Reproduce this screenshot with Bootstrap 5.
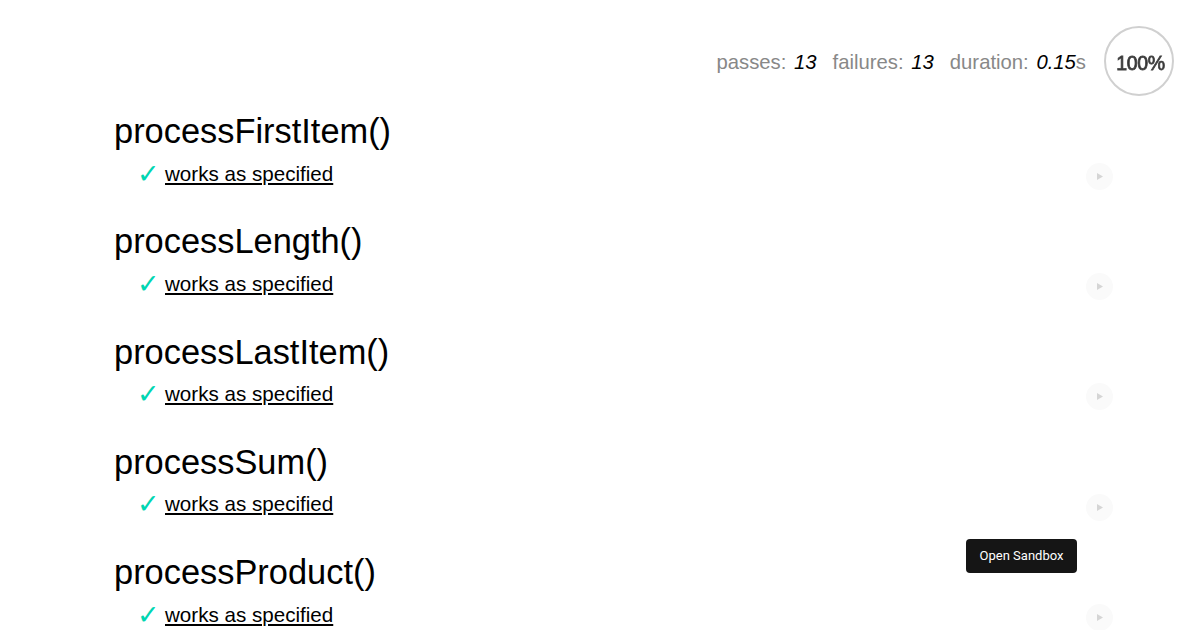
<!DOCTYPE html>
<html lang="en">
<head>
<meta charset="utf-8">
<title>Mocha report</title>
<link href="https://cdn.jsdelivr.net/npm/bootstrap@5.3.0/dist/css/bootstrap.min.css" rel="stylesheet">
<style>
html, body { height: 630px; overflow: hidden; background: #fff; }
body { font-family: "Liberation Sans", Arial, sans-serif; color: #000; position: relative; }
.stats-bar { height: 105.2px; padding: 26px 26px 0 0; }
.stat-line { font-size: 20.3px; line-height: 24px; color: #888; gap: 16px; margin-right: 18px; margin-top: 24px; }
.stat-line em { color: #000; margin-left: 2px; }
.ring { width: 70px; height: 70px; border-radius: 50%; border: 2px solid #d0d0d0; filter: blur(.5px); font-size: 19.5px; color: #333; -webkit-text-stroke: .8px #444; padding: 5px 0 0 3px; letter-spacing: -.4px; }
.suite-wrap { padding: 0 87px 0 114px; }
.suite-block { height: 110.25px; }
.suite-title { font-size: 34.4px; line-height: 40px; font-weight: 400; margin: 0; padding-top: 6px; height: 46.5px; color: #000; }
.spec-row { padding-left: 24px; height: 40px; }
.tick { color: #00d6b2; font-size: 27px; line-height: 30px; width: 27px; margin-top: 7px; margin-left: -1px; margin-right: 1px; font-family: "DejaVu Sans", sans-serif; }
.spec-link { color: #000; font-size: 20.6px; line-height: 30px; margin-top: 7px; }
.spec-link:hover { color: #000; }
.replay { width: 27px; height: 27px; border-radius: 50%; background: #fafafa; flex: none; margin-top: 11.3px; }
.tip-box { position: absolute; left: 966px; top: 539px; width: 111px; height: 34px; background: #151515; color: #fff; border-radius: 4px; font-family: Roboto, sans-serif; font-size: 13px; }
</style>
</head>
<body>
<div class="stats-bar d-flex justify-content-end align-items-start">
  <div class="stat-line d-flex">
    <span>passes: <em>13</em></span>
    <span>failures: <em>13</em></span>
    <span>duration: <em>0.15</em>s</span>
  </div>
  <div class="ring d-flex align-items-center justify-content-center">100%</div>
</div>
<div class="suite-wrap">
  <section class="suite-block">
    <h1 class="suite-title">processFirstItem()</h1>
    <div class="spec-row d-flex align-items-start"><span class="tick">✓</span><a class="spec-link flex-grow-1" href="#">works as specified</a><span class="replay d-flex align-items-center justify-content-center"><svg width="6" height="7" viewBox="0 0 6 7"><path d="M0 0l6 3.5L0 7z" fill="#d5d5d5"/></svg></span></div>
  </section>
  <section class="suite-block">
    <h1 class="suite-title">processLength()</h1>
    <div class="spec-row d-flex align-items-start"><span class="tick">✓</span><a class="spec-link flex-grow-1" href="#">works as specified</a><span class="replay d-flex align-items-center justify-content-center"><svg width="6" height="7" viewBox="0 0 6 7"><path d="M0 0l6 3.5L0 7z" fill="#d5d5d5"/></svg></span></div>
  </section>
  <section class="suite-block">
    <h1 class="suite-title">processLastItem()</h1>
    <div class="spec-row d-flex align-items-start"><span class="tick">✓</span><a class="spec-link flex-grow-1" href="#">works as specified</a><span class="replay d-flex align-items-center justify-content-center"><svg width="6" height="7" viewBox="0 0 6 7"><path d="M0 0l6 3.5L0 7z" fill="#d5d5d5"/></svg></span></div>
  </section>
  <section class="suite-block">
    <h1 class="suite-title">processSum()</h1>
    <div class="spec-row d-flex align-items-start"><span class="tick">✓</span><a class="spec-link flex-grow-1" href="#">works as specified</a><span class="replay d-flex align-items-center justify-content-center"><svg width="6" height="7" viewBox="0 0 6 7"><path d="M0 0l6 3.5L0 7z" fill="#d5d5d5"/></svg></span></div>
  </section>
  <section class="suite-block">
    <h1 class="suite-title">processProduct()</h1>
    <div class="spec-row d-flex align-items-start"><span class="tick">✓</span><a class="spec-link flex-grow-1" href="#">works as specified</a><span class="replay d-flex align-items-center justify-content-center"><svg width="6" height="7" viewBox="0 0 6 7"><path d="M0 0l6 3.5L0 7z" fill="#d5d5d5"/></svg></span></div>
  </section>
</div>
<div class="tip-box d-flex align-items-center justify-content-center">Open Sandbox</div>
<script src="https://cdn.jsdelivr.net/npm/bootstrap@5.3.0/dist/js/bootstrap.bundle.min.js"></script>
</body>
</html>
